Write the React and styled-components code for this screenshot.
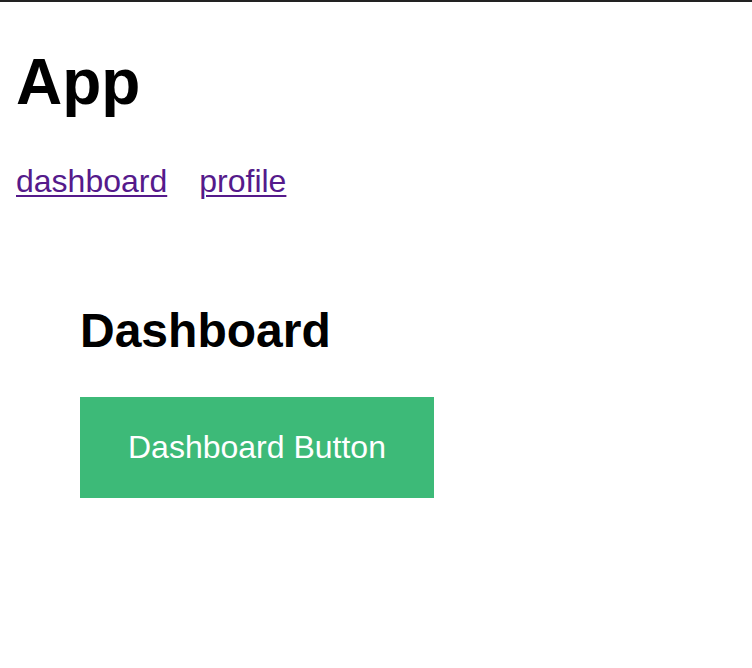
import React from "react";
import styled, { createGlobalStyle } from "styled-components";

const Global = createGlobalStyle`
  html, body { margin: 0; padding: 0; background: #fff; }
  body { font-family: "Liberation Sans", Arial, Helvetica, sans-serif; color: #000; }
`;

const Page = styled.div`
  border-top: 2px solid #222;
  padding: 0 16px;
  min-height: 666px;
  box-sizing: border-box;
`;

const Title = styled.h1`
  margin: 43px 0;
  font-size: 64px;
  line-height: 74px;
  font-weight: bold;
`;

const Nav = styled.nav`
  display: flex;
  gap: 32px;
  font-size: 32px;
  line-height: 37px;
  padding-top: 1px;
`;

const NavLink = styled.a`
  color: #551a8b;
  text-decoration: underline;
  text-underline-offset: 3px;
  text-decoration-thickness: 2px;
`;

const Section = styled.section`
  padding: 63px 64px 0;
`;

const Heading = styled.h2`
  margin: 40px 0 39px;
  font-size: 48px;
  line-height: 55px;
  font-weight: bold;
`;

const Button = styled.button`
  display: inline-flex;
  align-items: center;
  justify-content: center;
  height: 101px;
  padding: 0 48px;
  border: 0;
  background: #3dba78;
  color: #fff;
  font-family: "Liberation Sans", Arial, Helvetica, sans-serif;
  font-size: 32px;
  cursor: pointer;
`;

export default function App() {
  return (
    <>
      <Global />
      <Page>
        <Title>App</Title>
        <Nav>
          <NavLink href="#dashboard">dashboard</NavLink>
          <NavLink href="#profile">profile</NavLink>
        </Nav>
        <Section>
          <Heading>Dashboard</Heading>
          <Button>Dashboard Button</Button>
        </Section>
      </Page>
    </>
  );
}
